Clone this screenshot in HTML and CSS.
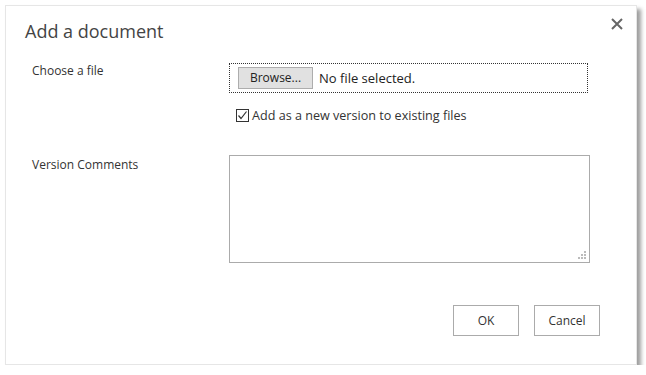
FILE: index.html
```html
<!DOCTYPE html>
<html lang="en">
<head>
  <meta charset="UTF-8" />
  <title>Add a document</title>
  <link rel="stylesheet" href="styles.css">
</head>
<body>

  <div class="dialog">
    <div class="dialog-header">
      <h1>Add a document</h1>
      <button class="close-btn" type="button" aria-label="Close">
        <svg width="12" height="12" viewBox="0 0 12 12">
          <path d="M1 1 L11 11 M11 1 L1 11" stroke="#666" stroke-width="2" fill="none" />
        </svg>
      </button>
    </div>

    <form class="upload-form">
      <div class="form-row">
        <label class="field-label">Choose a file</label>
        <div class="field">
          <div class="file-box">
            <span class="browse-btn">Browse...</span>
            <span class="file-name">No file selected.</span>
          </div>
          <label class="check-row">
            <span class="check-box">
              <svg width="11" height="11" viewBox="0 0 11 11">
                <path d="M1.5 5.5 L4 8.5 L9.5 1.5" stroke="#333" stroke-width="1.2" fill="none" />
              </svg>
            </span>
            Add as a new version to existing files
          </label>
        </div>
      </div>

      <div class="form-row comments-row">
        <label class="field-label">Version Comments</label>
        <div class="field">
          <div class="comments-box">
            <span class="grip"></span>
          </div>
        </div>
      </div>

      <div class="form-actions">
        <button type="button" class="action-btn">OK</button>
        <button type="button" class="action-btn">Cancel</button>
      </div>
    </form>
  </div>

</body>
</html>
```

FILE: styles.css
```css
* {
  margin: 0;
  padding: 0;
  box-sizing: border-box;
}

body {
  font-family: "Open Sans", "Noto Sans", Arial, sans-serif;
  font-size: 12px;
  color: #333;
  background: #fff;
  padding: 5px 0 0 5px;
}

.dialog {
  width: 632px;
  height: 360px;
  background: #fff;
  border: 1px solid #e6e6e6;
  box-shadow: 4px 4px 4px rgba(0, 0, 0, 0.38);
  padding: 0 0 0 19px;
}

.dialog-header {
  display: flex;
  justify-content: space-between;
  align-items: flex-start;
  height: 57px;
}

h1 {
  font-weight: normal;
  font-size: 18px;
  color: #444;
  margin-top: 13px;
}

.close-btn {
  background: none;
  border: none;
  margin: 11px 12px 0 0;
  width: 14px;
  height: 14px;
  display: flex;
  align-items: center;
  justify-content: center;
  cursor: pointer;
}

.upload-form {
  padding-left: 7px;
}

.form-row {
  display: flex;
}

.field-label {
  width: 197px;
  flex-shrink: 0;
  line-height: 16px;
}

.file-box {
  width: 359px;
  height: 30px;
  border: 1px dotted #333;
  display: flex;
  align-items: center;
  padding-left: 8px;
}

.browse-btn {
  display: inline-block;
  width: 75px;
  height: 22px;
  line-height: 20px;
  text-align: center;
  background: #e1e1e1;
  border: 1px solid #adadad;
  color: #222;
  font-size: 12px;
}

.file-name {
  margin-left: 6px;
  color: #222;
  font-size: 13px;
}

.check-row {
  display: flex;
  align-items: center;
  gap: 3px;
  margin: 14px 0 0 7px;
  color: #333;
  font-size: 12.6px;
}

.check-box {
  width: 13px;
  height: 13px;
  border: 1px solid #333;
  background: #fff;
  display: flex;
  align-items: center;
  justify-content: center;
}

.comments-row {
  margin-top: 31px;
}

.comments-row .field-label {
  margin-top: 2px;
}

.comments-box {
  position: relative;
  width: 361px;
  height: 108px;
  border: 1px solid #ababab;
}

.grip {
  position: absolute;
  right: 3px;
  bottom: 3px;
  width: 8px;
  height: 8px;
  background:
    linear-gradient(#bbb, #bbb) 6px 0 / 2px 2px no-repeat,
    linear-gradient(#bbb, #bbb) 3px 3px / 2px 2px no-repeat,
    linear-gradient(#bbb, #bbb) 6px 3px / 2px 2px no-repeat,
    linear-gradient(#bbb, #bbb) 0 6px / 2px 2px no-repeat,
    linear-gradient(#bbb, #bbb) 3px 6px / 2px 2px no-repeat,
    linear-gradient(#bbb, #bbb) 6px 6px / 2px 2px no-repeat;
}

.form-actions {
  display: flex;
  justify-content: flex-end;
  gap: 15px;
  margin: 42px 36px 0 0;
}

.action-btn {
  width: 66px;
  height: 31px;
  background: #fff;
  border: 1px solid #ababab;
  font-family: "Open Sans", "Noto Sans", Arial, sans-serif;
  font-size: 12px;
  color: #333;
}
```
